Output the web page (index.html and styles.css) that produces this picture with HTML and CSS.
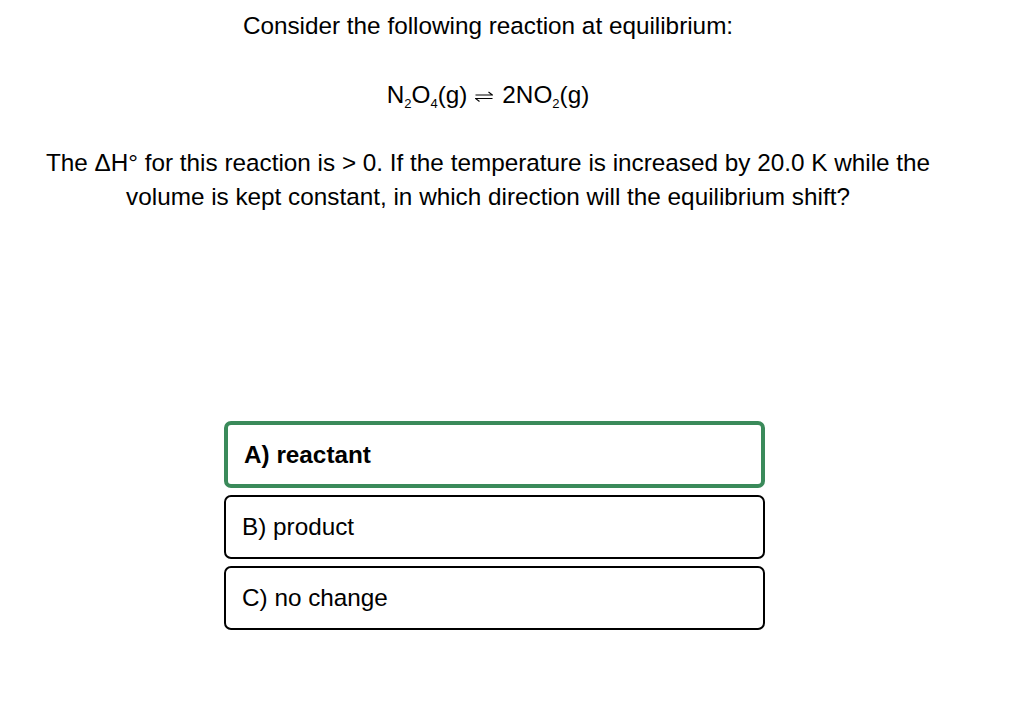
FILE: index.html
```html
<!DOCTYPE html>
<html lang="en">
<head>
<meta charset="utf-8">
<title>Equilibrium question</title>
<link rel="stylesheet" href="styles.css">
</head>
<body>
<main class="page">
  <p class="intro">Consider the following reaction at equilibrium:</p>
  <p class="equation">N<sub>2</sub>O<sub>4</sub>(g)<svg class="arrow" width="18" height="12" viewBox="0 0 18 12" aria-hidden="true"><path d="M0.5 4H17.5L13.5 1M17.5 7.5H0.5L4.5 10.5" fill="none" stroke="#000" stroke-width="1.1"/></svg>2NO<sub>2</sub>(g)</p>
  <p class="question">The &#916;H&deg; for this reaction is &gt; 0. If the temperature is increased by 20.0 K while the volume is kept constant, in which direction will the equilibrium shift?</p>
  <ul class="options">
    <li class="option selected">A) reactant</li>
    <li class="option">B) product</li>
    <li class="option">C) no change</li>
  </ul>
</main>
</body>
</html>
```
FILE: styles.css
```css
html, body {
  margin: 0;
  padding: 0;
  background: #fff;
}

body {
  font-family: "Liberation Sans", Arial, Helvetica, sans-serif;
  font-size: 24.3px;
  line-height: 34px;
  color: #000;
}

.page {
  width: 920px;
  margin-left: 28px;
  padding-top: 9px;
  text-align: center;
}

.page p {
  margin: 0;
}

.intro {
  margin-bottom: 35px !important;
}

.equation {
  margin-bottom: 34px !important;
  white-space: nowrap;
}

.equation sub {
  font-size: 13px;
  line-height: 0;
  vertical-align: -5px;
}

.arrow {
  display: inline-block;
  margin: 0 9px 0 8px;
  vertical-align: baseline;
}

.question {
  margin-bottom: 207px !important;
}

.options {
  list-style: none;
  margin: 0 0 0 196px;
  padding: 0;
  width: 541px;
  display: flex;
  flex-direction: column;
  gap: 7px;
  text-align: left;
}

.option {
  box-sizing: border-box;
  height: 64px;
  border: 2px solid #000;
  border-radius: 7px;
  padding: 0 16px;
  display: flex;
  align-items: center;
}

.option.selected {
  height: 67px;
  border: 4px solid #3a8a5a;
  font-weight: bold;
}
```
